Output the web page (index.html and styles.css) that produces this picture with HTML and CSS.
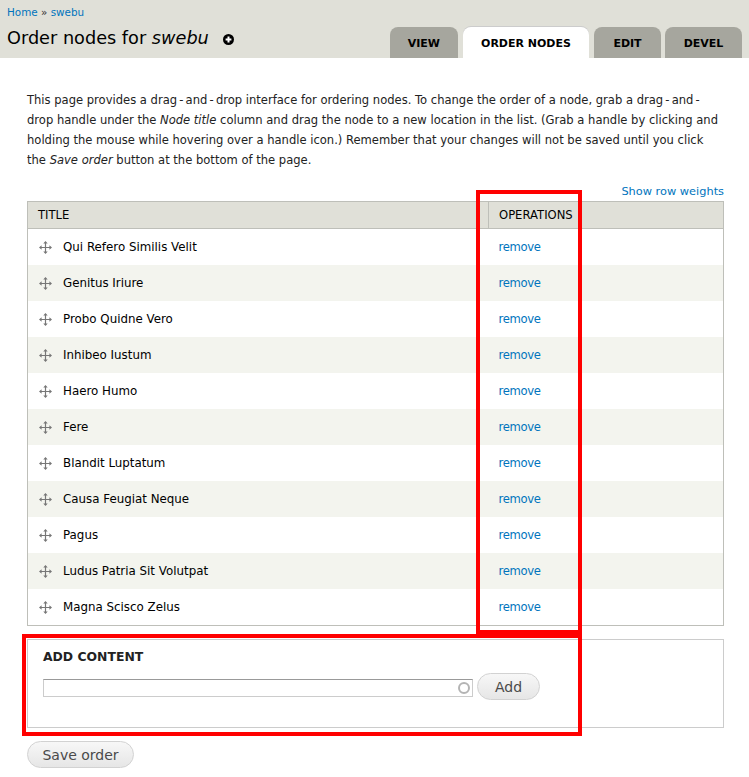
FILE: index.html
```html
<!DOCTYPE html>
<html lang="en">
<head>
    <meta charset="UTF-8">
    <title>Order nodes for swebu</title>
    <link rel="stylesheet" href="styles.css">
</head>
<body>
    <svg class="defs" width="0" height="0">
        <symbol id="handle" viewBox="0 0 13 13">
            <path d="M6.5 1v11M1 6.5h11" stroke="#777" stroke-width="1.2" fill="none"/>
            <path d="M6.5 0l2.2 2.6h-4.4zM6.5 13l2.2-2.6h-4.4zM0 6.5l2.6-2.2v4.4zM13 6.5l-2.6-2.2v4.4z" fill="#777"/>
        </symbol>
    </svg>

    <div class="page-header">
        <div class="header-left">
            <div class="breadcrumb"><a href="#">Home</a> <span class="sep">»</span> <a href="#">swebu</a></div>
            <h1>Order nodes for <em>swebu</em>
                <svg class="shortcut" width="11" height="11" viewBox="0 0 11 11">
                    <circle cx="5.5" cy="5.5" r="5.5" fill="#000"/>
                    <path d="M5.5 2.6v5.8M2.6 5.5h5.8" stroke="#fff" stroke-width="2"/>
                </svg>
            </h1>
        </div>
        <ul class="tabs">
            <li><a href="#">View</a></li>
            <li class="active"><a href="#">Order nodes</a></li>
            <li class="edit-tab"><a href="#">Edit</a></li>
            <li class="devel-tab"><a href="#">Devel</a></li>
        </ul>
    </div>

    <div class="content">
        <p class="help">This page provides a drag<span class="dash">-</span>and<span class="dash">-</span>drop interface for ordering nodes. To change the order of a node, grab a drag<span class="dash">-</span>and<span class="dash">-</span>drop handle under the <em>Node title</em> column and drag the node to a new location in the list. (Grab a handle by clicking and holding the mouse while hovering over a handle icon.) Remember that your changes will not be saved until you click the <em>Save order</em> button at the bottom of the page.</p>

        <div class="weights-toggle"><a href="#">Show row weights</a></div>

        <table class="nodes">
            <thead>
                <tr><th class="col-title">Title</th><th class="col-ops">Operations</th></tr>
            </thead>
            <tbody id="rows">
                <tr><td><svg class="handle"><use href="#handle"/></svg>Qui Refero Similis Velit</td><td class="ops"><a href="#">remove</a></td></tr>
                <tr class="even"><td><svg class="handle"><use href="#handle"/></svg>Genitus Iriure</td><td class="ops"><a href="#">remove</a></td></tr>
                <tr><td><svg class="handle"><use href="#handle"/></svg>Probo Quidne Vero</td><td class="ops"><a href="#">remove</a></td></tr>
                <tr class="even"><td><svg class="handle"><use href="#handle"/></svg>Inhibeo Iustum</td><td class="ops"><a href="#">remove</a></td></tr>
                <tr><td><svg class="handle"><use href="#handle"/></svg>Haero Humo</td><td class="ops"><a href="#">remove</a></td></tr>
                <tr class="even"><td><svg class="handle"><use href="#handle"/></svg>Fere</td><td class="ops"><a href="#">remove</a></td></tr>
                <tr><td><svg class="handle"><use href="#handle"/></svg>Blandit Luptatum</td><td class="ops"><a href="#">remove</a></td></tr>
                <tr class="even"><td><svg class="handle"><use href="#handle"/></svg>Causa Feugiat Neque</td><td class="ops"><a href="#">remove</a></td></tr>
                <tr><td><svg class="handle"><use href="#handle"/></svg>Pagus</td><td class="ops"><a href="#">remove</a></td></tr>
                <tr class="even"><td><svg class="handle"><use href="#handle"/></svg>Ludus Patria Sit Volutpat</td><td class="ops"><a href="#">remove</a></td></tr>
                <tr class="last"><td><svg class="handle"><use href="#handle"/></svg>Magna Scisco Zelus</td><td class="ops"><a href="#">remove</a></td></tr>
            </tbody>
        </table>

        <div class="add-box">
            <h2>Add content</h2>
            <div class="add-row">
                <div class="autocomplete">
                    <input type="text">
                    <span class="throbber"></span>
                </div>
                <button class="btn btn-add" type="button">Add</button>
            </div>
        </div>

        <button class="btn btn-save" type="button">Save order</button>
    </div>

    <div class="mark mark-ops"></div>
    <div class="mark mark-add"></div>
</body>
</html>
```

FILE: styles.css
```css
html, body {
    height: 777px;
    overflow: hidden;
}

body {
    margin: 0;
    position: relative;
    font-family: 'DejaVu Sans', 'Liberation Sans', sans-serif;
    font-size: 11.85px;
    line-height: 20px;
    color: #000;
    background-color: #fff;
}

a {
    color: #0074bd;
    text-decoration: none;
}

.defs {
    display: block;
    height: 0;
}

.page-header {
    display: flex;
    justify-content: space-between;
    align-items: flex-end;
    height: 58px;
    padding: 0 7px;
    background-color: #e0e0d8;
}

.header-left {
    align-self: flex-start;
}

.breadcrumb {
    padding-top: 2px;
    font-size: 10.4px;
    line-height: 20px;
}

.breadcrumb .sep {
    color: #333;
}

h1 {
    margin: 4px 0 0;
    font-size: 17.7px;
    font-weight: normal;
    line-height: 24px;
}

.shortcut {
    margin-left: 9px;
    vertical-align: -1px;
}

.tabs {
    display: flex;
    gap: 5px;
    list-style: none;
    margin: 0;
    padding: 0;
}

.tabs li {
    height: 31px;
    background-color: #a6a69e;
    border-radius: 8px 8px 0 0;
}

.tabs a {
    display: block;
    padding: 0 18px;
    color: #000;
    font-size: 11px;
    font-weight: bold;
    line-height: 33px;
    text-align: center;
    text-transform: uppercase;
}

.tabs .active {
    width: 126px;
    background-color: #fff;
    box-shadow: 0 -1px 0 #ccc;
}

.tabs .active a,
.tabs .edit-tab a,
.tabs .devel-tab a {
    padding: 0;
}

.tabs .edit-tab {
    width: 67px;
}

.tabs .devel-tab {
    width: 77px;
    margin-left: -1px;
}

.content {
    padding: 0 25px 0 27px;
}

.help {
    margin: 0;
    padding-top: 32px;
    color: #222;
    font-size: 11.55px;
}

.dash {
    padding: 0 2.2px;
}

.weights-toggle {
    height: 20px;
    margin-top: 12px;
    margin-bottom: -1px;
    font-size: 11.35px;
    line-height: 19px;
    text-align: right;
}

.nodes {
    width: 100%;
    border-collapse: collapse;
    border: 1px solid #bebfb9;
}

.nodes th {
    height: 27px;
    padding: 0 10px;
    box-sizing: border-box;
    background-color: #e0e0d8;
    border-bottom: 1px solid #bebfb9;
    font-size: 11.6px;
    font-weight: normal;
    text-align: left;
    text-transform: uppercase;
}

.col-ops {
    width: 235px;
    border-left: 1px solid #bebfb9;
}

.nodes td {
    height: 36px;
    padding: 0 10px;
    box-sizing: border-box;
}

.nodes .last td {
    height: 37px;
}

.nodes .ops {
    font-size: 11.6px;
    letter-spacing: -0.35px;
}

.nodes .even td {
    background-color: #f3f4ee;
}

.handle {
    width: 13px;
    height: 13px;
    margin: 0 11px 0 1px;
    vertical-align: -3px;
}

.add-box {
    height: 89px;
    margin-top: 13px;
    padding: 7px 15px 0;
    box-sizing: border-box;
    border: 1px solid #ccc;
}

.add-box h2 {
    margin: 0;
    color: #222;
    font-size: 12.4px;
    font-weight: bold;
    line-height: 20px;
    text-transform: uppercase;
}

.add-row {
    display: flex;
    align-items: center;
    gap: 4px;
    margin-top: 6px;
}

.autocomplete {
    position: relative;
    width: 430px;
    height: 18px;
    margin-top: 2px;
}

.autocomplete input {
    display: block;
    width: 100%;
    height: 100%;
    margin: 0;
    padding: 0 4px;
    box-sizing: border-box;
    border: 1px solid #ccc;
    border-top-color: #999;
    border-radius: 0;
    background: #fff;
}

.throbber {
    position: absolute;
    top: 3px;
    right: 3px;
    width: 8px;
    height: 8px;
    border: 2px solid #b4b4b4;
    border-radius: 50%;
}

.btn {
    display: block;
    height: 27px;
    padding: 0 17px;
    border: 1px solid #d2d2d2;
    border-radius: 14px;
    background: linear-gradient(#f7f7f7, #e6e6e6);
    color: #4a4a4a;
    font-family: 'DejaVu Sans', 'Liberation Sans', sans-serif;
    font-size: 14px;
}

.btn-add {
    width: 63px;
    padding: 0;
}

.btn-save {
    width: 107px;
    margin-top: 13px;
    padding: 0;
}

/* red annotation boxes drawn on top of the page */
.mark {
    position: absolute;
    box-sizing: border-box;
    border: 4px solid #f00;
}

.mark-ops {
    left: 476px;
    top: 190px;
    width: 106px;
    height: 444px;
}

.mark-add {
    left: 22px;
    top: 634px;
    width: 560px;
    height: 102px;
}
```
